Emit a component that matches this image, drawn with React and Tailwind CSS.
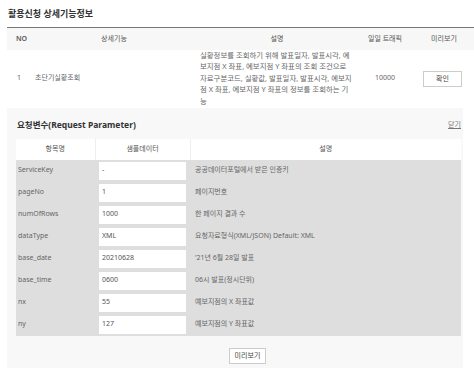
import React from "react";

const params = [
  { name: "ServiceKey", value: "-", desc: "공공데이터포털에서 받은 인증키" },
  { name: "pageNo", value: "1", desc: "페이지번호" },
  { name: "numOfRows", value: "1000", desc: "한 페이지 결과 수" },
  { name: "dataType", value: "XML", desc: "요청자료형식(XML/JSON) Default: XML" },
  { name: "base_date", value: "20210628", desc: "'21년 6월 28일 발표" },
  { name: "base_time", value: "0600", desc: "06시 발표(정시단위)" },
  { name: "nx", value: "55", desc: "예보지점의 X 좌표값" },
  { name: "ny", value: "127", desc: "예보지점의 Y 좌표값" },
];

export default function App() {
  return (
    <div className="w-[474px] h-[372px] overflow-hidden bg-white text-[#666] font-['Noto_Sans','Noto_Sans_CJK_KR',sans-serif]">
      <div className="pl-[7px] pt-[7px]">
        {/* 상세기능정보 */}
        <h2 className="pl-px text-[9px] leading-[13px] font-bold text-[#333]">
          활용신청 상세기능정보
        </h2>

        <table className="mt-[7px] w-[467px] table-fixed border-collapse border-t-[1.5px] border-[#777] text-[7px]">
          <colgroup>
            <col className="w-[23px]" />
            <col className="w-[168px]" />
            <col className="w-[158px]" />
            <col className="w-[58px]" />
            <col className="w-[60px]" />
          </colgroup>
          <thead>
            <tr className="h-[22px] bg-[#f7f7f7] text-[#555]">
              <th className="pl-[9px] text-left font-semibold">NO</th>
              <th className="font-normal">상세기능</th>
              <th className="font-normal">설명</th>
              <th className="font-normal">일일 트래픽</th>
              <th className="font-normal">미리보기</th>
            </tr>
          </thead>
          <tbody>
            <tr className="h-[58px]">
              <td className="pl-[10px] text-[#666]">1</td>
              <td className="pl-[5px] text-[#666]">초단기실황조회</td>
              <td className="pl-[2px] pr-[2px] text-[7.4px] leading-[11.6px] text-[#666] break-all">
                실황정보를 조회하기 위해 발표일자, 발표시각, 예보지점 X 좌표, 예보지점 Y 좌표의 조회 조건으로 자료구분코드, 실황값, 발표일자, 발표시각, 예보지점 X 좌표, 예보지점 Y 좌표의 정보를 조회하는 기능
              </td>
              <td className="text-center">
                <span className="text-[#666]">10000</span>
              </td>
              <td className="pl-[9px]">
                <button className="w-[39px] h-[16px] border border-[#ccc] bg-white text-[#444] text-[7px] leading-none">
                  확인
                </button>
              </td>
            </tr>
          </tbody>
        </table>

        {/* 요청변수 */}
        <div className="w-[456px] h-[260px] bg-[#f8f8f8] pl-[9px] pr-[2px] pt-[12px]">
          <div className="flex items-center justify-between h-[12px]">
            <h3 className="pl-px text-[8.5px] font-bold text-[#333]">
              요청변수(Request Parameter)
            </h3>
            <span className="text-[7px] text-[#777] underline">닫기</span>
          </div>

          <table className="mt-[7px] w-[445px] table-fixed border-collapse text-[7px]">
            <colgroup>
              <col className="w-[79px]" />
              <col className="w-[95px]" />
              <col className="w-[271px]" />
            </colgroup>
            <thead>
              <tr className="h-[21px] bg-white text-[#555]">
                <th className="font-normal border-r border-[#eee]">항목명</th>
                <th className="font-normal border-r border-[#eee]">샘플데이터</th>
                <th className="font-normal">설명</th>
              </tr>
            </thead>
            <tbody className="bg-[#dedede]">
              {params.map((p) => (
                <tr key={p.name} className="h-[22px]">
                  <td className="pl-[2px]">{p.name}</td>
                  <td className="px-[4px]">
                    <div className="h-[18px] bg-white flex items-center pl-[3px] text-[#555]">
                      {p.value}
                    </div>
                  </td>
                  <td className="pl-[5px]">{p.desc}</td>
                </tr>
              ))}
            </tbody>
          </table>

          <div className="flex justify-center pt-[12px]">
            <button className="w-[37px] h-[16px] ml-[18px] border border-[#ccc] bg-white text-[#444] text-[7px] leading-none">
              미리보기
            </button>
          </div>
        </div>
      </div>
    </div>
  );
}
